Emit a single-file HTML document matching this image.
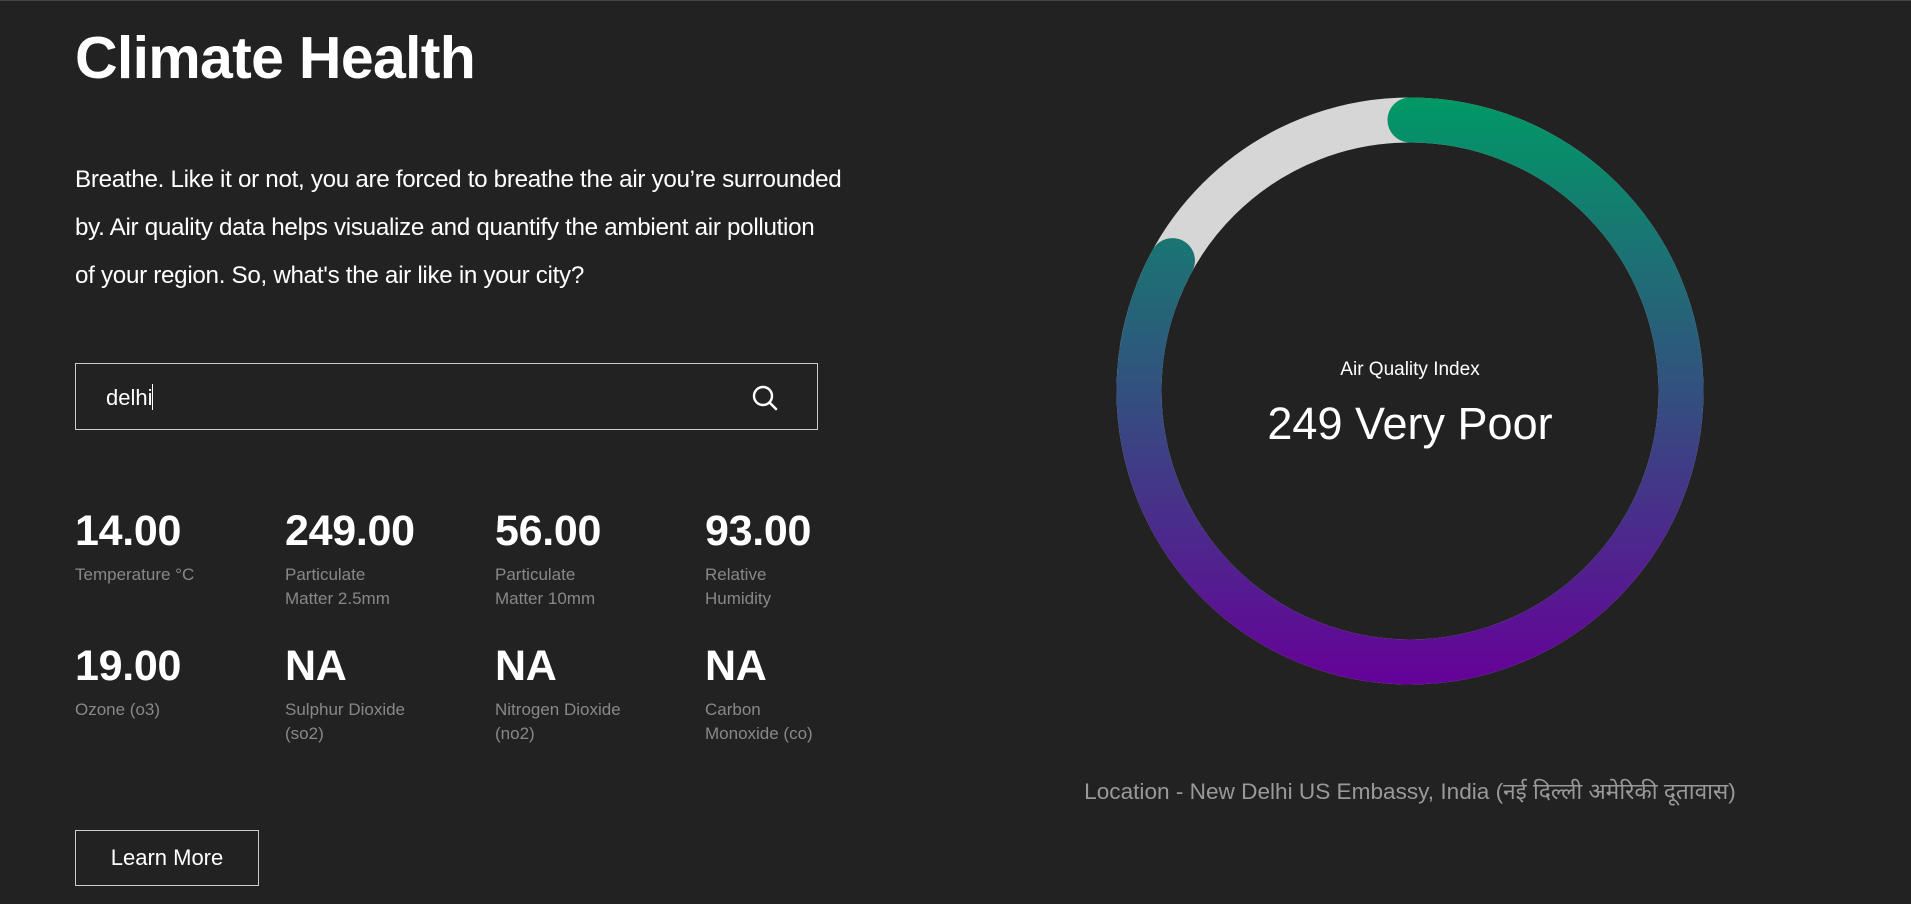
<!DOCTYPE html>
<html><head><meta charset="utf-8"><style>
html,body{margin:0;padding:0;background:#222222;width:1911px;height:904px;overflow:hidden;font-family:"Liberation Sans",sans-serif;color:#fff;position:relative}
.topline{position:absolute;left:0;top:0;width:1911px;height:1px;background:#444}
h1{position:absolute;left:75px;top:24px;margin:0;font-size:59px;font-weight:bold;letter-spacing:-0.7px}
.p{position:absolute;left:75px;top:156px;width:820px;font-size:24.2px;line-height:48px;letter-spacing:-0.3px;white-space:nowrap}
.search{position:absolute;left:75px;top:363px;width:743px;height:67px;border:1px solid #ccc;box-sizing:border-box}
.search span{position:absolute;left:30px;top:20px;font-size:22px}
.search span:after{content:"";display:inline-block;width:1px;height:26px;background:#fff;vertical-align:-5px}
.stat{position:absolute;width:200px}
.stat b{display:block;font-size:43px;line-height:44px;letter-spacing:-0.3px}
.stat i{display:block;font-style:normal;color:#888;font-size:17px;line-height:24px;margin-top:10px}
.btn{position:absolute;left:75px;top:830px;width:184px;height:56px;border:1px solid #ccc;box-sizing:border-box;font-size:22px;text-align:center;line-height:54px}
.loc{position:absolute;left:910px;width:1000px;top:775px;text-align:center;color:#999;font-size:22.6px;font-family:"Liberation Sans","Noto Sans CJK SC",sans-serif}
</style></head><body>
<div class="topline"></div>
<h1>Climate Health</h1>
<div class="p">Breathe. Like it or not, you are forced to breathe the air you’re surrounded<br>by. Air quality data helps visualize and quantify the ambient air pollution<br>of your region. So, what's the air like in your city?</div>
<div class="search"><span>delhi</span>
<svg style="position:absolute;left:675px;top:20px" width="28" height="28" viewBox="0 0 28 28"><circle cx="12" cy="12" r="9" fill="none" stroke="#fff" stroke-width="2.4"/><line x1="18.5" y1="18.5" x2="25" y2="25" stroke="#fff" stroke-width="2.6" stroke-linecap="round"/></svg></div>

<div class="stat" style="left:75px;top:509px"><b>14.00</b><i>Temperature °C</i></div>
<div class="stat" style="left:285px;top:509px"><b>249.00</b><i>Particulate<br>Matter 2.5mm</i></div>
<div class="stat" style="left:495px;top:509px"><b>56.00</b><i>Particulate<br>Matter 10mm</i></div>
<div class="stat" style="left:705px;top:509px"><b>93.00</b><i>Relative<br>Humidity</i></div>
<div class="stat" style="left:75px;top:644px"><b>19.00</b><i>Ozone (o3)</i></div>
<div class="stat" style="left:285px;top:644px"><b>NA</b><i>Sulphur Dioxide<br>(so2)</i></div>
<div class="stat" style="left:495px;top:644px"><b>NA</b><i>Nitrogen Dioxide<br>(no2)</i></div>
<div class="stat" style="left:705px;top:644px"><b>NA</b><i>Carbon<br>Monoxide (co)</i></div>

<div class="btn">Learn More</div>

<svg style="position:absolute;left:0;top:0" width="1911" height="904">
<defs><linearGradient id="g" gradientUnits="userSpaceOnUse" x1="0" y1="97" x2="0" y2="686"><stop offset="0" stop-color="#009966"/><stop offset="0.5" stop-color="#33507f"/><stop offset="1" stop-color="#660099"/></linearGradient></defs>
<circle cx="1410" cy="391" r="271" fill="none" stroke="#d6d6d6" stroke-width="45"/>
<path d="M1410 120 A271 271 0 1 1 1410 662 A271 271 0 1 1 1410 120" fill="none" stroke="url(#g)" stroke-width="45" stroke-linecap="round" stroke-dasharray="1413 2000"/>
<text x="1410" y="375" text-anchor="middle" font-family="Liberation Sans" font-size="19" fill="#fff">Air Quality Index</text>
<text x="1410" y="439" text-anchor="middle" font-family="Liberation Sans" font-size="45" fill="#fff">249 Very Poor</text>
</svg>
<div class="loc">Location - New Delhi US Embassy, India (नई दिल्ली अमेरिकी दूतावास)</div>
</body></html>
